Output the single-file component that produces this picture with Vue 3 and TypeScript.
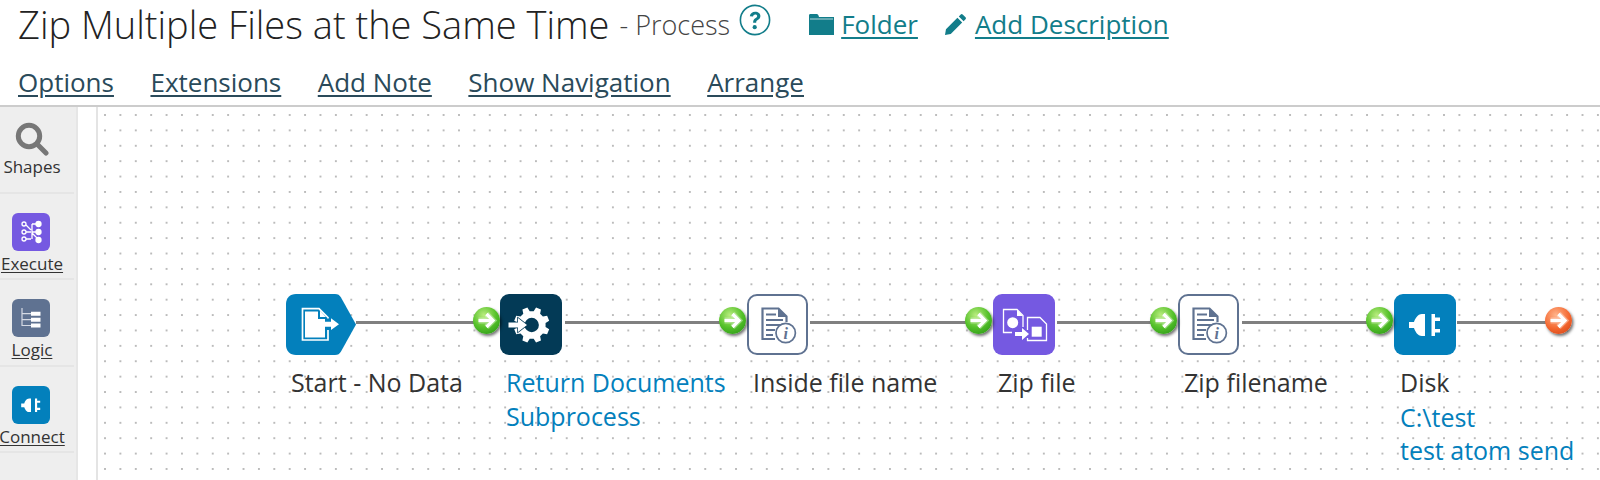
<script setup lang="ts">
interface Connector { left: number; width: number }
interface Ball { x: number; kind: 'go' | 'end' }
interface Label { x: number; y: number; text: string; link?: boolean }

const navItems: string[] = ['Options', 'Extensions', 'Add Note', 'Show Navigation', 'Arrange']

const connectors: Connector[] = [
  { left: 258, width: 120 },
  { left: 467, width: 160 },
  { left: 712, width: 158 },
  { left: 959, width: 98 },
  { left: 1144, width: 130 },
  { left: 1359, width: 92 }
]

const balls: Ball[] = [
  { x: 375, kind: 'go' },
  { x: 621, kind: 'go' },
  { x: 867, kind: 'go' },
  { x: 1052, kind: 'go' },
  { x: 1268, kind: 'go' },
  { x: 1447, kind: 'end' }
]

const labels: Label[] = [
  { x: 193, y: 258, text: 'Start - No Data' },
  { x: 408, y: 258, text: 'Return Documents', link: true },
  { x: 408, y: 292, text: 'Subprocess', link: true },
  { x: 655, y: 258, text: 'Inside file name' },
  { x: 900, y: 258, text: 'Zip file' },
  { x: 1086, y: 258, text: 'Zip filename' },
  { x: 1302, y: 258, text: 'Disk' },
  { x: 1302, y: 293, text: 'C:\\test', link: true },
  { x: 1302, y: 326, text: 'test atom send', link: true }
]

function gearPath(cx: number, cy: number, outer: number, inner: number, teeth: number): string {
  const pts: string[] = []
  const step = (Math.PI * 2) / teeth
  for (let i = 0; i < teeth; i++) {
    const a = i * step + step / 2
    const at = (r: number, d: number): string =>
      `${(cx + Math.cos(a + d) * r).toFixed(2)} ${(cy + Math.sin(a + d) * r).toFixed(2)}`
    pts.push(at(inner, -step * 0.32), at(outer, -step * 0.19), at(outer, step * 0.19), at(inner, step * 0.32))
  }
  return 'M' + pts.join('L') + 'Z'
}

const gear = gearPath(31.7, 31, 18, 14, 8)
const plugLeft = 'M31 20V42H28C23.500 42 21 37 20 34H15V28H20C21 25 23.500 20 28 20Z'
const plugRight = 'M37.500 20H41V23.500H46V27H41V35H46V38.500H41V42H37.500Z'
</script>

<template>
  <div class="page">
    <header class="head">
      <div class="title-row">
        <h1 class="title">Zip Multiple Files at the Same Time</h1>
        <span class="kind">- Process</span>
        <svg class="help" viewBox="0 0 32 32" width="32" height="32">
          <circle cx="16" cy="16" r="14.600" fill="none" stroke="#127d8a" stroke-width="1.600" />
          <path d="M10.800 12.200c.4-3 2.600-4.500 5.400-4.500 3 0 5.200 1.700 5.200 4.300 0 2-1.100 3-2.600 4-1.200.8-1.600 1.300-1.600 2.700h-3.100c0-2.300.7-3.300 2.200-4.400 1.200-.9 1.900-1.400 1.900-2.300 0-1-.8-1.600-1.900-1.600-1.200 0-2 .7-2.300 2z" fill="#127d8a" />
          <circle cx="15.700" cy="23.200" r="2.100" fill="#127d8a" />
        </svg>
        <a class="top-link folder">
          <svg viewBox="0 0 25 21" width="25" height="21">
            <path d="M0 1.500C0 .5.5 0 1.500 0h6C8.500 0 9 .5 9.500 1.500L10 3h15v18H0z" fill="#127d8a" />
            <path d="M1 5h23" stroke="#fff" stroke-width="1" opacity=".7" />
          </svg>
          <span>Folder</span>
        </a>
        <a class="top-link desc">
          <svg viewBox="0 0 22 22" width="21" height="21">
            <path d="M0 22l1-6L13 4l5 5L6 21zM14.500 2.500L16.500.5a1.500 1.500 0 0 1 2 0l3 3a1.500 1.500 0 0 1 0 2l-2 2z" fill="#127d8a" />
          </svg>
          <span>Add Description</span>
        </a>
      </div>
      <nav class="nav">
        <a v-for="item in navItems" :key="item" class="nav-link">{{ item }}</a>
      </nav>
    </header>

    <div class="body">
      <aside class="rail">
        <div class="tool first">
          <svg class="lens" viewBox="0 0 34 34" width="34" height="34">
            <circle cx="14" cy="14" r="10.700" fill="none" stroke="#777" stroke-width="5" />
            <path d="M22 22l9 9" stroke="#777" stroke-width="5" stroke-linecap="round" />
          </svg>
          <span class="tool-name plain">Shapes</span>
        </div>
        <div class="tool">
          <span class="chip purple">
            <svg viewBox="0 0 38 38" width="38" height="38" fill="none" stroke="#fff" stroke-width="1.300">
              <circle cx="12" cy="11" r="2" /><circle cx="12" cy="19" r="2" /><circle cx="12" cy="26" r="2" />
              <path d="M14 12l5 5M14 19h5M14 26h5M20 11v15M20 11h6M20 19h6M20 20l6 6" />
              <circle cx="26.500" cy="11" r="2.500" fill="#fff" /><circle cx="26.500" cy="19" r="2.500" fill="#fff" /><circle cx="26.500" cy="27" r="2.500" fill="#fff" />
            </svg>
          </span>
          <a class="tool-name">Execute</a>
        </div>
        <div class="tool tall">
          <span class="chip slate">
            <svg viewBox="0 0 38 38" width="38" height="38">
              <path d="M10 9v18M10 14.700h9M10 20.700h9M10 26.500h9" fill="none" stroke="#d5dae4" stroke-width="1.200" />
              <path d="M19 12.700h9.500v4H19zM19 18.700h9.500v4H19zM19 24.500h9.500v4H19z" fill="#fff" />
            </svg>
          </span>
          <a class="tool-name">Logic</a>
        </div>
        <div class="tool">
          <span class="chip blue">
            <svg viewBox="0 0 62 61" width="38" height="38">
              <path :d="plugLeft" fill="#fff" />
              <path :d="plugRight" fill="#fff" />
            </svg>
          </span>
          <a class="tool-name">Connect</a>
        </div>
      </aside>

      <div class="gutter"></div>

      <main class="canvas">
        <i
          v-for="(c, i) in connectors"
          :key="'c' + i"
          class="connector"
          :style="{ left: c.left + 'px', width: c.width + 'px' }"
        ></i>

        <div class="shape start">
          <svg viewBox="0 0 70 61" width="70" height="61">
            <path d="M10 0h39c3 0 4.500 1 6 3.500L70 30.500 55 57.500c-1.500 2.500-3 3.500-6 3.500H10C4 61 0 57 0 51V10C0 4 4 0 10 0z" fill="#0380bc" />
            <path d="M42 24.500V23.500L33 14.700H16.500V46H42V36" fill="none" stroke="#fff" stroke-width="1.700" />
            <path d="M19 17.500H32V25H39V43.500H19z" fill="#fff" />
            <path d="M34 16.500l6 6.500h-6z" fill="#fff" />
            <path d="M39 27.700H45V24.300L53 30.200 45 36V32.700H39z" fill="#fff" />
          </svg>
        </div>

        <div class="shape gear">
          <svg viewBox="0 0 62 61" width="62" height="61">
            <path :d="gear" fill="#fff" />
            <circle cx="31.700" cy="31" r="7.200" fill="#033a56" />
            <path d="M8.500 28.500H18V24L27 31l-9 7V33.500H8.500z" fill="#fff" stroke="#033a56" stroke-width="1.500" paint-order="stroke" />
          </svg>
        </div>

        <div class="shape note one">
          <svg viewBox="0 0 62 61" width="62" height="61">
            <rect x="1" y="1" width="59" height="59" rx="9" fill="#fff" stroke="#5f7291" stroke-width="2" />
            <path d="M28 45H15.500V14.500H31.500L39.500 22.500V28" fill="none" stroke="#5f7291" stroke-width="2.200" />
            <path d="M31 14l9 9h-9z" fill="#5f7291" />
            <path d="M19 20.500h10M19 26h17M19 31h15M19 36h9M19 41h7" stroke="#5f7291" stroke-width="1.800" />
            <circle cx="38.700" cy="39" r="9.700" fill="#fff" stroke="#5f7291" stroke-width="1.700" />
            <text x="38.700" y="44.500" class="info-i">i</text>
          </svg>
        </div>

        <div class="shape zip">
          <svg viewBox="0 0 62 61" width="62" height="61" fill="none" stroke="#fff" stroke-width="1.300">
            <rect width="62" height="61" rx="9" fill="#7559e1" stroke="none" />
            <path d="M19 38.500H10.500V15.500H24L30 21.500V33" />
            <path d="M24 15.500L30 22H24z" fill="#fff" stroke="none" />
            <circle cx="19.700" cy="28.700" r="5.500" fill="#fff" stroke="none" />
            <path d="M34.500 36V23.500H47L53.500 30V46.500H34.500V44" />
            <path d="M38.700 32.700h10v10h-10z" fill="#fff" stroke="none" />
            <path d="M22 38h7v-4l7 6-7 6v-4h-7z" fill="#fff" stroke="#7559e1" stroke-width="1" paint-order="stroke" />
          </svg>
        </div>

        <div class="shape note two">
          <svg viewBox="0 0 62 61" width="62" height="61">
            <rect x="1" y="1" width="59" height="59" rx="9" fill="#fff" stroke="#5f7291" stroke-width="2" />
            <path d="M28 45H15.500V14.500H31.500L39.500 22.500V28" fill="none" stroke="#5f7291" stroke-width="2.200" />
            <path d="M31 14l9 9h-9z" fill="#5f7291" />
            <path d="M19 20.500h10M19 26h17M19 31h15M19 36h9M19 41h7" stroke="#5f7291" stroke-width="1.800" />
            <circle cx="38.700" cy="39" r="9.700" fill="#fff" stroke="#5f7291" stroke-width="1.700" />
            <text x="38.700" y="44.500" class="info-i">i</text>
          </svg>
        </div>

        <div class="shape disk">
          <svg viewBox="0 0 62 61" width="62" height="61">
            <rect width="62" height="61" rx="9" fill="#0380bc" />
            <path :d="plugLeft" fill="#fff" />
            <path :d="plugRight" fill="#fff" />
          </svg>
        </div>

        <span
          v-for="(b, i) in balls"
          :key="'b' + i"
          class="ball"
          :class="b.kind"
          :style="{ left: b.x + 'px' }"
        >
          <svg viewBox="0 0 27 27" width="27" height="27" fill="none">
            <path d="M5.500 13.500h14.500M13.500 7l6.500 6.500-6.500 6.500" stroke="#fff" stroke-opacity=".35" stroke-width="6" />
            <path d="M5.500 13.500h14.500M13.500 7l6.500 6.500-6.500 6.500" stroke="#fff" stroke-width="3.200" />
          </svg>
        </span>

        <span
          v-for="(l, i) in labels"
          :key="'l' + i"
          class="label"
          :class="{ link: l.link }"
          :style="{ left: l.x + 'px', top: l.y + 'px' }"
        >{{ l.text }}</span>
      </main>
    </div>
  </div>
</template>

<style>
html, body { margin: 0; background: #fff; }
</style>

<style scoped>
.page {
  width: 1600px;
  height: 480px;
  overflow: hidden;
  display: flex;
  flex-direction: column;
  font-family: "Open Sans", "Noto Sans", sans-serif;
  color: #222;
  background: #fff;
}
.head {
  flex: none;
  box-sizing: border-box;
  height: 107px;
  padding: 0 18px;
  border-bottom: 2px solid #ccc;
}
.title-row {
  display: flex;
  align-items: flex-start;
  height: 64px;
}
.title {
  margin: -1px 0 0;
  font-size: 38px;
  font-weight: 300;
  line-height: 50px;
  white-space: nowrap;
  color: #222;
}
.kind {
  margin-left: 10px;
  margin-top: 7px;
  font-size: 27px;
  font-weight: 300;
  line-height: 36px;
  color: #444;
}
.help {
  margin-left: 9px;
  margin-top: 4px;
}
.top-link {
  display: flex;
  align-items: center;
  gap: 7px;
  margin-top: 6px;
  font-size: 26px;
  line-height: 36px;
  color: #127d8a;
}
.top-link span { text-decoration: underline; text-underline-offset: 3px; }
.folder { margin-left: 38px; }
.desc { margin-left: 27px; gap: 9px; }
.nav {
  display: flex;
  gap: 36.500px;
}
.nav-link {
  font-size: 26px;
  line-height: 36px;
  color: #2a4a5a;
  text-decoration: underline;
  text-underline-offset: 3px;
}
.body {
  flex: 1;
  display: flex;
  min-height: 0;
}
.rail {
  width: 78px;
  box-sizing: border-box;
  flex: none;
  background: #eee;
  border-right: 2px solid #e6e6e6;
  display: flex;
  flex-direction: column;
}
.tool {
  flex: none;
  box-sizing: border-box;
  height: 86px;
  width: 74px;
  padding-top: 19px;
  padding-right: 12px;
  border-bottom: 2px solid #e5e5e5;
  display: flex;
  flex-direction: column;
  align-items: center;
}
.tool.first {
  height: 87px;
  padding-top: 15px;
}
.tool.tall { height: 87px; }
.lens { flex: none; margin-bottom: -2px; margin-left: 2px; }
.chip {
  flex: none;
  width: 38px;
  height: 38px;
  border-radius: 6px;
  display: block;
}
.chip svg { display: block; }
.purple { background: #7559e1; }
.slate { background: #5f7291; }
.blue { background: #0380bc; }
.tool-name {
  font-size: 17px;
  line-height: 25px;
  margin-left: 2px;
  color: #333;
  white-space: nowrap;
  text-decoration: underline;
  text-underline-offset: 2px;
}
.tool-name.plain { text-decoration: none; }
.gutter {
  width: 18px;
  flex: none;
  background: #fff;
  border-right: 2px solid #e4e4e4;
}
.canvas {
  position: relative;
  flex: 1;
  background-color: #fff;
  background-image: radial-gradient(circle at center, #bbb 0, #bbb 0.800px, transparent 1.200px);
  background-size: 15.400px 15.400px;
  background-position: -0.700px 0.300px;
}
.connector {
  position: absolute;
  top: 214px;
  height: 3px;
  background: #808080;
}
.shape {
  position: absolute;
  top: 187px;
  width: 62px;
  height: 61px;
}
.shape svg { display: block; }
.start { left: 188px; width: 70px; }
.gear { left: 402px; background: #033a56; border-radius: 9px; }
.note.one { left: 649px; }
.zip { left: 895px; }
.note.two { left: 1080px; }
.disk { left: 1296px; }
.info-i {
  font-family: "Liberation Serif", serif;
  font-style: italic;
  font-weight: 700;
  font-size: 16px;
  text-anchor: middle;
  fill: #5f7291;
}
.ball {
  position: absolute;
  top: 200px;
  width: 27px;
  height: 27px;
  border-radius: 50%;
  box-shadow: 1.500px 2px 3px rgba(0, 0, 0, 0.550);
}
.ball svg { display: block; }
.ball.go { background: radial-gradient(circle at 40% 30%, #b9ec7e 0, #55c12a 50%, #1f8c12 100%); }
.ball.end { background: radial-gradient(circle at 40% 30%, #ffb38a 0, #f4672f 55%, #c93c12 100%); }
.label {
  position: absolute;
  font-size: 25px;
  line-height: 34px;
  white-space: nowrap;
  color: #333;
}
.label.link { color: #0380bc; }
</style>
